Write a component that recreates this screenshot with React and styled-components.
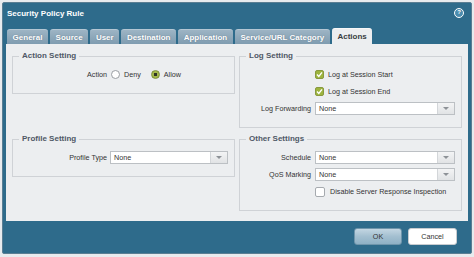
import React from 'react'
import styled, { createGlobalStyle } from 'styled-components'

const GlobalStyle = createGlobalStyle`
    html, body {
        margin: 0;
        padding: 0;
        background: #e8ebee;
    }
    body {
        font-family: "Liberation Sans", Arial, sans-serif;
        color: #333;
    }
`

const Dialog = styled.div`
    box-sizing: border-box;
    width: 470px;
    height: 252px;
    margin: 2px 0 0 2px;
    background: #2e6b8b;
    border: 1px solid #5a7e93;
    border-radius: 2px;
    padding: 0 3px;
    display: flex;
    flex-direction: column;
`

const Header = styled.div`
    box-sizing: border-box;
    height: 25px;
    display: flex;
    align-items: center;
    justify-content: space-between;
    padding: 0 4px 5px 1px;
`

const Title = styled.div`
    color: #fff;
    font-weight: bold;
    font-size: 8px;
`

const Help = styled.span`
    box-sizing: border-box;
    width: 10px;
    height: 10px;
    border-radius: 50%;
    border: 1.5px solid #fff;
    background: #4b8cae;
    color: #fff;
    font-size: 6px;
    font-weight: bold;
    line-height: 7px;
    text-align: center;
`

const TabBar = styled.div`
    height: 16px;
    display: flex;
    align-items: flex-end;
    gap: 2px;
    padding-left: 1px;
`

const Tab = styled.div`
    box-sizing: border-box;
    height: ${ p => p.active ? 16 : 15 }px;
    padding: 0 5.6px;
    display: flex;
    align-items: center;
    font-size: 8px;
    font-weight: bold;
    border-radius: 3px 3px 0 0;
    color: ${ p => p.active ? '#3a3d42' : '#fff' };
    background: ${ p => p.active ? '#eceef0' : 'linear-gradient(#9db4c4, #7f9cb0)' };
    border-top: 1px solid ${ p => p.active ? '#f6f7f8' : '#b4c6d3' };
    text-shadow: ${ p => p.active ? 'none' : '0 0 1px rgba(40, 60, 80, 0.5)' };
`

const Panel = styled.div`
    box-sizing: border-box;
    height: 177px;
    background: #eceef0;
    padding: 7px 6px;
    display: grid;
    grid-template-columns: 1fr 1fr;
    column-gap: 4px;
    row-gap: 6px;
    align-items: start;
    align-content: start;
`

const Group = styled.fieldset`
    margin: 0;
    padding: 7px 6px 12px 0;
    border: 1px solid #cfd2d6;
    min-width: 0;
`

const Legend = styled.legend`
    font-size: 8px;
    line-height: 10px;
    font-weight: bold;
    color: #4f5866;
    padding: 0 3px;
    margin-left: 6px;
`

const Rows = styled.div`
    display: grid;
    grid-template-columns: ${ p => p.labelWidth }px 1fr;
    column-gap: ${ p => p.gap }px;
    row-gap: 4px;
    grid-auto-rows: 13px;
    align-items: center;
`

const Label = styled.div`
    font-size: 7.2px;
    text-align: right;
    white-space: nowrap;
`

const Control = styled.div`
    grid-column: 2;
    display: flex;
    align-items: center;
    height: 13px;
    font-size: 7.2px;
    white-space: nowrap;
`

const Radio = styled.span`
    box-sizing: border-box;
    width: 9px;
    height: 9px;
    border-radius: 50%;
    border: 1px solid ${ p => p.checked ? '#7d8f3a' : '#9a9ea3' };
    background: ${ p => p.checked ? 'radial-gradient(circle, #2f3327 0 1.6px, #a4b84a 2px)' : '#fff' };
    margin-right: 4px;
`

const Option = styled.span`
    margin-right: 10px;
`

const Check = styled.span`
    box-sizing: border-box;
    width: ${ p => p.checked ? 9 : 10 }px;
    height: ${ p => p.checked ? 9 : 10 }px;
    border-radius: 2px;
    border: 1px solid ${ p => p.checked ? '#88993f' : '#a6aaaf' };
    background: ${ p => p.checked ? '#9db43e' : '#fff' };
    margin-right: ${ p => p.checked ? 4 : 5 }px;
    display: flex;
    align-items: center;
    justify-content: center;
`

const SelectBox = styled.div`
    box-sizing: border-box;
    flex: 1;
    height: 13px;
    border: 1px solid #bcc0c4;
    background: #fff;
    display: flex;
`

const SelectValue = styled.div`
    flex: 1;
    padding-left: 3px;
    line-height: 11px;
    font-size: 7.2px;
`

const SelectArrow = styled.div`
    width: 16px;
    border-left: 1px solid #d3d6d9;
    background: linear-gradient(#f3f4f5, #e1e3e5);
    display: flex;
    align-items: center;
    justify-content: center;
    &::after {
        content: '';
        border-left: 3px solid transparent;
        border-right: 3px solid transparent;
        border-top: 3px solid #8d9297;
    }
`

const Footer = styled.div`
    flex: 1;
    display: flex;
    justify-content: flex-end;
    align-items: flex-start;
    gap: 6px;
    padding: 7px 11px 0 0;
`

const Button = styled.div`
    box-sizing: border-box;
    width: ${ p => p.width }px;
    height: 17px;
    border-radius: 3px;
    font-size: 7.2px;
    display: flex;
    align-items: center;
    justify-content: center;
    color: #333;
    border: 1px solid ${ p => p.primary ? '#6f95ab' : '#c8ccd0' };
    background: ${ p => p.primary ? 'linear-gradient(#c3d6e2, #a3bfd0 50%, #8fb1c5)' : '#fff' };
`

const Tick = () => (
    <svg width="7" height="7" viewBox="0 0 7 7">
        <path d="M1 3.6 L2.8 5.4 L6 1.4" fill="none" stroke="#fff" strokeWidth="1.4" />
    </svg>
)

const Select = ({ value }) => (
    <SelectBox>
        <SelectValue>{ value }</SelectValue>
        <SelectArrow />
    </SelectBox>
)

const tabs = ['General', 'Source', 'User', 'Destination', 'Application', 'Service/URL Category', 'Actions']

export default function App() {
    return (
        <>
            <GlobalStyle />
            <Dialog>
                <Header>
                    <Title>Security Policy Rule</Title>
                    <Help>?</Help>
                </Header>
                <TabBar>
                    { tabs.map(t => <Tab key={ t } active={ t === 'Actions' }>{ t }</Tab>) }
                </TabBar>
                <Panel>
                    <Group>
                        <Legend>Action Setting</Legend>
                        <Rows labelWidth={ 94 } gap={ 4 }>
                            <Label>Action</Label>
                            <Control>
                                <Radio /><Option>Deny</Option>
                                <Radio checked /><Option>Allow</Option>
                            </Control>
                        </Rows>
                    </Group>
                    <Group>
                        <Legend>Log Setting</Legend>
                        <Rows labelWidth={ 71 } gap={ 4 }>
                            <Control><Check checked><Tick /></Check>Log at Session Start</Control>
                            <Control><Check checked><Tick /></Check>Log at Session End</Control>
                            <Label>Log Forwarding</Label>
                            <Control><Select value="None" /></Control>
                        </Rows>
                    </Group>
                    <Group>
                        <Legend>Profile Setting</Legend>
                        <Rows labelWidth={ 94 } gap={ 3 }>
                            <Label>Profile Type</Label>
                            <Control><Select value="None" /></Control>
                        </Rows>
                    </Group>
                    <Group>
                        <Legend>Other Settings</Legend>
                        <Rows labelWidth={ 71 } gap={ 4 }>
                            <Label>Schedule</Label>
                            <Control><Select value="None" /></Control>
                            <Label>QoS Marking</Label>
                            <Control><Select value="None" /></Control>
                            <Control><Check />Disable Server Response Inspection</Control>
                        </Rows>
                    </Group>
                </Panel>
                <Footer>
                    <Button primary width={ 48 }>OK</Button>
                    <Button width={ 49 }>Cancel</Button>
                </Footer>
            </Dialog>
        </>
    )
}
